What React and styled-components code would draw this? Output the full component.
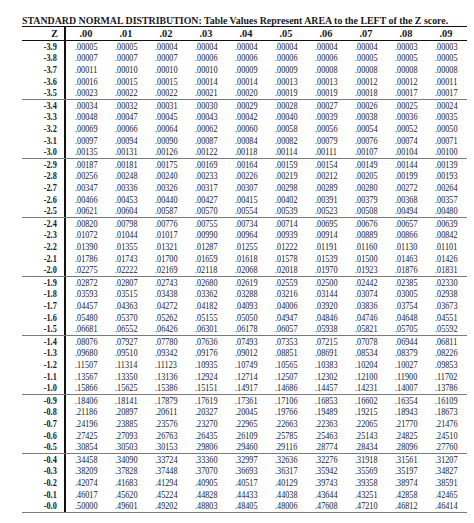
import styled, { createGlobalStyle } from "styled-components";

const GlobalStyle = createGlobalStyle`
  body {
    margin: 0;
    background: #fff;
    color: #1a1a1a;
    font-family: "Liberation Serif", "Times New Roman", serif;
  }
`;

// standard normal cdf, Simpson integration of the density from 0 to |z|
function cdf(z) {
  const a = Math.abs(z);
  const n = 2000;
  const h = a / n;
  const f = (t) => Math.exp(-t * t / 2) / Math.sqrt(2 * Math.PI);
  let s = f(0) + f(a);
  for (let k = 1; k < n; k++) s += (k % 2 ? 4 : 2) * f(k * h);
  const area = (s * h) / 3;
  return z < 0 ? 0.5 - area : 0.5 + area;
}

const COLS = Array.from({ length: 10 }, (_, j) => j);
const ROWS = Array.from({ length: 40 }, (_, i) => 39 - i);

const fmt = (p) => p.toFixed(5).slice(1);

export default function App() {
  return (
    <Sheet>
      <GlobalStyle />
      <Title>
        STANDARD NORMAL DISTRIBUTION: Table Values Represent AREA to the LEFT of the Z score.
      </Title>
      <HeadRow>
        <ZCell>Z</ZCell>
        {COLS.map((j) => (
          <HeadCell key={j}>.0{j}</HeadCell>
        ))}
      </HeadRow>
      {ROWS.map((r, i) => (
        <Row key={r} $group={i % 5 === 4}>
          <ZCell>
            <Num>-{(r / 10).toFixed(1)}</Num>
          </ZCell>
          {COLS.map((j) => (
            <Cell key={j}>
              <Num>{fmt(cdf(-(r / 10 + j / 100)))}</Num>
            </Cell>
          ))}
        </Row>
      ))}
    </Sheet>
  );
}

const Sheet = styled.div`
  width: 445px;
  padding: 15px 0 0 22px;
`;

const Title = styled.div`
  font-size: 9.9px;
  font-weight: 700;
  line-height: 11px;
  white-space: nowrap;
  border-bottom: 1.5px solid #111;
`;

const Grid = styled.div`
  display: grid;
  grid-template-columns: 44px repeat(10, 40px);
  box-sizing: border-box;
  font-size: 10.4px;
`;

const HeadRow = styled(Grid)`
  height: 14px;
  font-weight: 700;
  border-bottom: 1.5px solid #111;
`;

const Row = styled(Grid)`
  height: 11.8px;
  border-bottom: ${(p) => (p.$group ? "1.6px solid #7a7a7a" : "none")};
`;

const ZCell = styled.div`
  display: flex;
  align-items: center;
  justify-content: flex-end;
  padding-right: 6px;
  font-weight: 700;
  border-right: 2px solid #111;
`;

const HeadCell = styled.div`
  display: flex;
  align-items: center;
  justify-content: center;
`;

const Cell = styled(HeadCell)``;

const Num = styled.span`
  display: inline-block;
  transform: scaleX(0.79);
  line-height: 1;
`;
